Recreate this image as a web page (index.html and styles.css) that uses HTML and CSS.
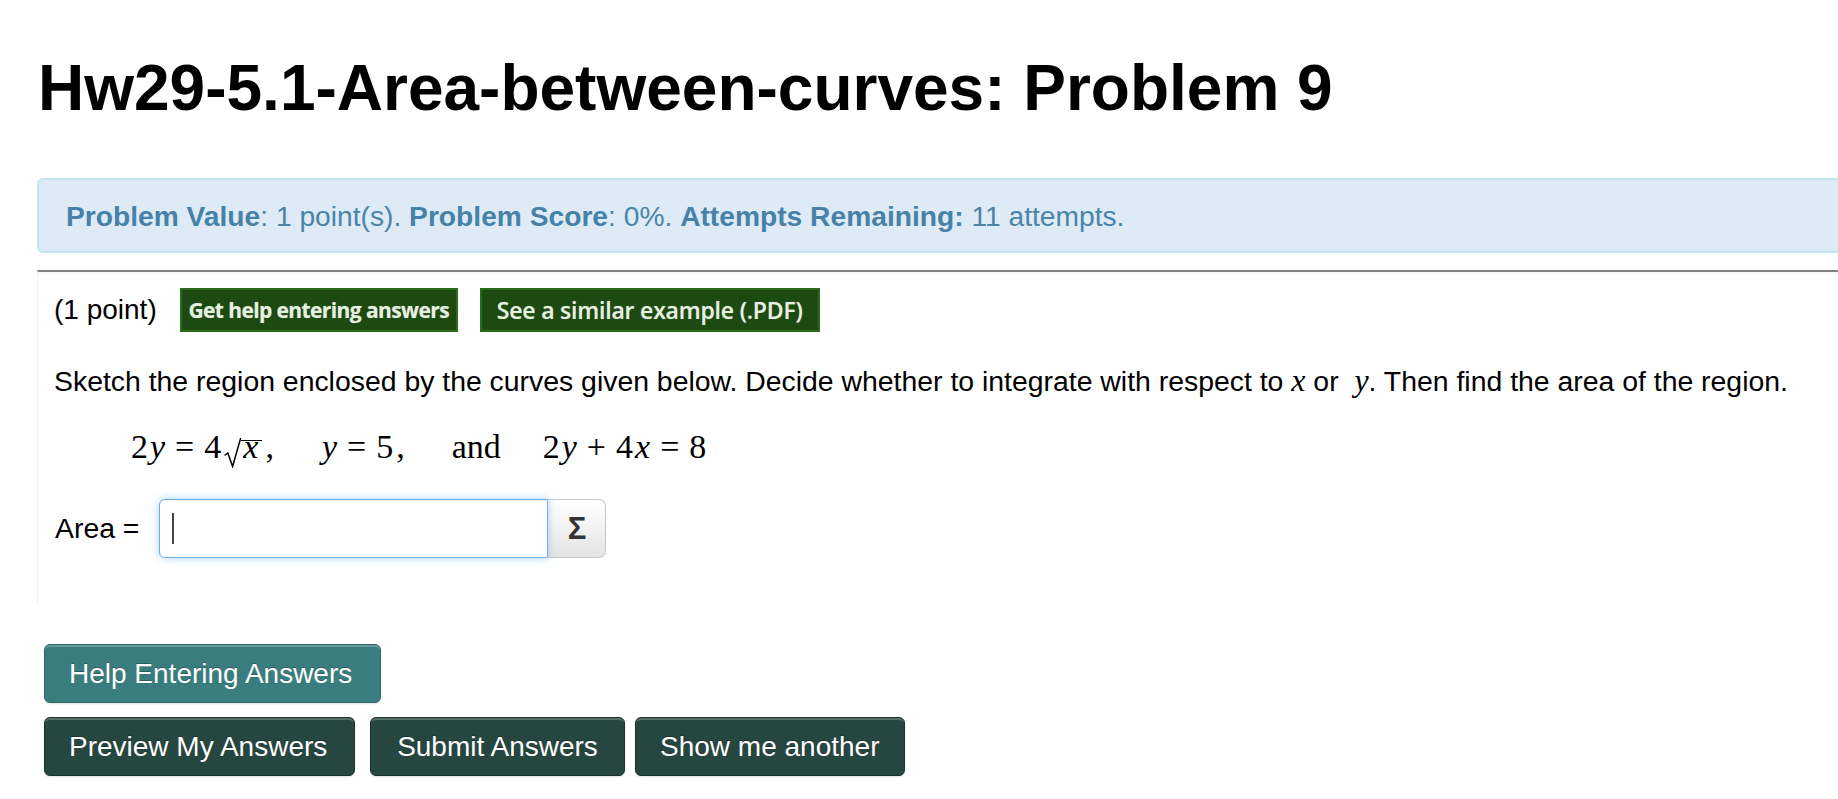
FILE: index.html
```html
<!DOCTYPE html>
<html>
<head>
<meta charset="utf-8">
<title>Hw29-5.1-Area-between-curves: Problem 9</title>
<link rel="stylesheet" href="styles.css">
</head>
<body>
<div class="page">
  <h1 class="title">Hw29-5.1-Area-between-curves: Problem 9</h1>

  <div class="alert">
    <b>Problem Value</b>: 1 point(s). <b>Problem Score</b>: 0%. <b>Attempts Remaining:</b> 11 attempts.
  </div>

  <div class="problem">
    <div class="head-row">
      <span class="points">(1 point)</span>
      <span class="gbtn gbtn-small">Get help entering answers</span>
      <span class="gbtn gbtn-large">See a similar example (.PDF)</span>
    </div>

    <p class="statement">Sketch the region enclosed by the curves given below. Decide whether to integrate with respect to <i class="mv">x</i> or&nbsp; <i class="mv">y</i>. Then find the area of the region.</p>

    <div class="math"><span>2</span><i class="v">y</i><span class="rel">=</span><span>4</span><span class="sqrt"><svg class="rad" width="17" height="30" viewBox="0 0 17 30"><path d="M0.6 17.5 L3.8 15 L8.6 28.5 L16.5 0.8 L17 0.8" fill="none" stroke="#000" stroke-width="1.5" stroke-linejoin="miter"/></svg><span class="radicand"><i>x</i></span></span><span class="punct">,</span><span class="quad"></span><i>y</i><span class="rel">=</span><span>5</span><span class="punct">,</span><span class="quad q2"></span><span>and</span><span class="quad q3"></span><span>2</span><i class="v">y</i><span class="bin">+</span><span>4</span><i class="v">x</i><span class="rel">=</span><span>8</span></div>

    <div class="answer-row">
      <span class="label">Area =</span>
      <div class="input"><span class="caret"></span></div>
      <span class="sigma">Σ</span>
    </div>
  </div>

  <div class="buttons">
    <div class="btn-line">
      <span class="btn btn-teal">Help Entering Answers</span>
    </div>
    <div class="btn-line">
      <span class="btn btn-dark btn-preview">Preview My Answers</span>
      <span class="btn btn-dark btn-submit">Submit Answers</span>
      <span class="btn btn-dark btn-another">Show me another</span>
    </div>
  </div>
</div>
</body>
</html>
```

FILE: styles.css
```css
html, body {
  margin: 0;
  padding: 0;
  overflow: hidden;
  background: #fff;
}

body {
  font-family: "Liberation Sans", Arial, Helvetica, sans-serif;
  color: #000;
}

.page {
  padding-left: 37px;
  width: calc(100% + 60px);
  box-sizing: border-box;
}

.title {
  margin: 52px 0 0 1px;
  font-size: 64px;
  line-height: 72px;
  font-weight: bold;
}

.alert {
  margin-top: 54px;
  border: 2px solid #c2e6ef;
  background: #deebf6;
  border-radius: 6px;
  padding: 20px 0 19px 27px;
  font-size: 28.2px;
  line-height: 32px;
  color: #4a84a8;
}

.alert b {
  font-weight: bold;
  color: #4682a8;
}

.problem {
  margin-top: 17px;
  border-top: 2px solid #808080;
  border-left: 1px solid #f2f2f2;
  box-shadow: inset 0 3px 4px -2px rgba(0, 0, 0, 0.06);
  padding: 16px 0 0 16px;
  height: 333px;
  box-sizing: border-box;
}

.head-row {
  display: flex;
  align-items: center;
  height: 44px;
}

.points {
  font-size: 28px;
  margin-right: 23px;
}

.gbtn {
  display: inline-flex;
  align-items: center;
  justify-content: center;
  box-sizing: border-box;
  height: 44px;
  background: #1d4a11;
  border: 2px solid #2c6a1e;
  color: #e6f0e0;
  font-family: "Open Sans", "DejaVu Sans", sans-serif;
  font-weight: 700;
  text-shadow: 0 0 1px rgba(255, 255, 255, 0.4);
  white-space: nowrap;
}

.gbtn-small {
  width: 278px;
  font-size: 21px;
  letter-spacing: -0.6px;
  margin-right: 22px;
}

.gbtn-large {
  width: 340px;
  font-size: 23px;
  font-weight: 600;
  letter-spacing: -0.2px;
}

.statement {
  margin: 32px 0 0 0;
  font-size: 28.4px;
  line-height: 32px;
}

.mv {
  font-family: "Liberation Serif", "Times New Roman", serif;
  font-size: 32px;
}

.math {
  margin: 30px 0 0 77px;
  font-family: "Liberation Serif", "Times New Roman", serif;
  font-size: 34px;
  line-height: 40px;
  white-space: nowrap;
}

.math .v {
  margin-left: 2px;
}

.rel, .bin {
  padding: 0 10px;
}

.punct {
  margin-left: 3px;
}

.quad {
  display: inline-block;
  width: 48px;
}

.q2 {
  width: 47px;
}

.q3 {
  width: 42px;
}

.sqrt {
  margin-left: 3px;
}

.rad {
  display: inline-block;
  vertical-align: -10px;
}

.radicand {
  display: inline-block;
  border-top: 1.5px solid #000;
  line-height: 12px;
  padding: 0 4px 0 2px;
}

.answer-row {
  margin-top: 31px;
  display: flex;
  align-items: center;
}

.label {
  font-size: 28.4px;
  margin-right: 20px;
  margin-left: 1px;
}

.input {
  box-sizing: border-box;
  width: 389px;
  height: 59px;
  border: 1.5px solid #71ade6;
  border-radius: 6px 0 0 6px;
  background: #fff;
  box-shadow: 0 0 9px rgba(102, 175, 233, 0.55), inset 0 1px 1px rgba(0, 0, 0, 0.05);
  display: flex;
  align-items: center;
  padding-left: 12px;
  position: relative;
  z-index: 1;
}

.caret {
  display: block;
  width: 1.5px;
  height: 31px;
  background: #444;
}

.sigma {
  box-sizing: border-box;
  width: 58px;
  height: 59px;
  display: inline-flex;
  align-items: center;
  justify-content: center;
  border: 1px solid #c9c9c9;
  border-left: none;
  border-radius: 0 7px 7px 0;
  background: linear-gradient(#ffffff, #e4e4e4);
  font-weight: bold;
  font-size: 31px;
  color: #333;
}

.buttons {
  margin-top: 41px;
  margin-left: 7px;
}

.btn-line {
  display: flex;
  margin-bottom: 14px;
}

.btn {
  box-sizing: border-box;
  height: 59px;
  display: inline-flex;
  align-items: center;
  padding: 0 24px;
  border-radius: 6px;
  font-size: 28px;
  color: #fff;
  white-space: nowrap;
  text-shadow: 0 -1px 0 rgba(0, 0, 0, 0.25);
}

.btn-teal {
  background: #3a7d7f;
  border: 1px solid #2f6a6c;
  box-shadow: inset 0 3px 0 -1px rgba(255, 255, 255, 0.22), 0 1px 2px rgba(0, 0, 0, 0.12);
  width: 337px;
}

.btn-dark {
  background: #264640;
  border: 1px solid #1b332e;
  box-shadow: inset 0 3px 0 -1px rgba(255, 255, 255, 0.22), 0 1px 2px rgba(0, 0, 0, 0.12);
}

.btn-preview {
  margin-right: 15px;
  width: 311px;
}

.btn-submit {
  margin-right: 10px;
  width: 255px;
  justify-content: center;
  padding: 0;
}

.btn-another {
  width: 270px;
}
```
